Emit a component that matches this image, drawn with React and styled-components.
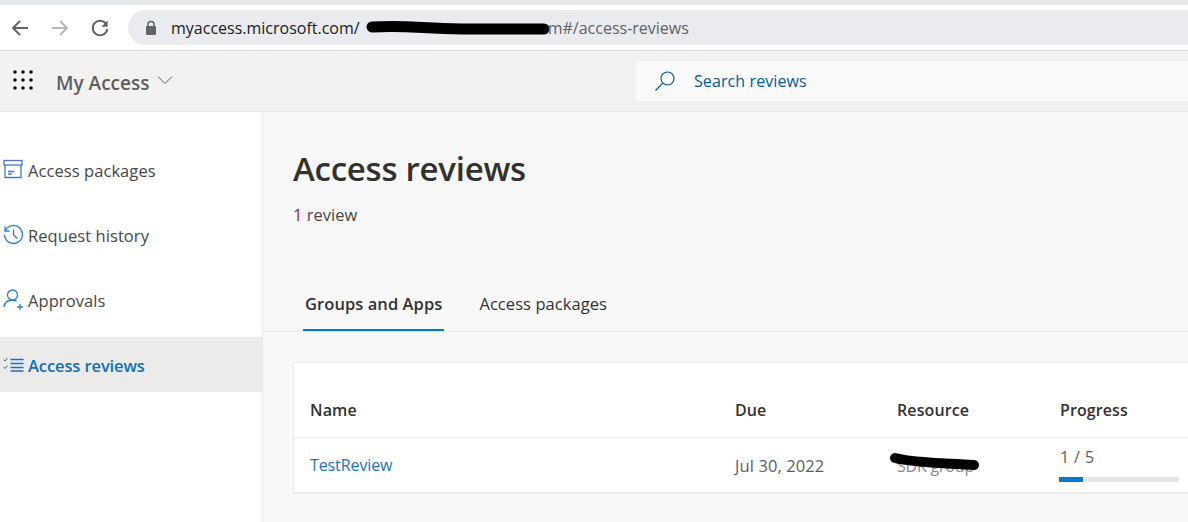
import React from "react";
import styled, { createGlobalStyle } from "styled-components";

const GlobalStyle = createGlobalStyle`
  html, body {
    margin: 0;
    padding: 0;
    height: 100%;
    overflow: hidden;
    background: #f8f8f8;
    font-family: "Open Sans", "Noto Sans", "Liberation Sans", sans-serif;
  }
  * {
    box-sizing: border-box;
  }
`;

const Page = styled.div`
  width: 1188px;
  height: 522px;
  display: flex;
  flex-direction: column;
  overflow: hidden;
`;

const TabStrip = styled.div`
  height: 5px;
  flex: none;
  background: #e6e9ec;
`;

const BrowserBar = styled.div`
  height: 46px;
  flex: none;
  display: flex;
  align-items: flex-start;
  padding: 5px 0 0 10px;
  background: #ffffff;
  border-bottom: 1px solid #dcdcdc;
`;

const NavButton = styled.div`
  width: 40px;
  height: 35px;
  flex: none;
  display: flex;
  align-items: center;
  color: ${(p) => (p.$disabled ? "#b4b6b9" : "#5f6368")};
`;

const AddressPill = styled.div`
  flex: 1;
  height: 35px;
  margin-left: -2px;
  display: flex;
  align-items: center;
  padding-left: 17px;
  background: #e9ebee;
  border-radius: 18px 0 0 18px;
`;

const UrlHost = styled.span`
  margin-left: 14px;
  font-size: 16px;
  color: #202124;
  white-space: nowrap;
`;

const UrlPath = styled.span`
  font-size: 16px;
  color: #5f6368;
  white-space: nowrap;
`;

const UrlScribble = styled.svg`
  width: 190px;
  height: 16px;
  margin: 1px -4px 0 2px;
  flex: none;
`;

const AppHeader = styled.header`
  height: 61px;
  flex: none;
  display: flex;
  align-items: center;
  background: #f3f2f1;
  border-bottom: 1px solid #e6e6e6;
`;

const Waffle = styled.svg`
  width: 20px;
  height: 20px;
  margin: -2px 0 0 13px;
  flex: none;
`;

const AppName = styled.div`
  margin: 4px 0 0 23px;
  font-size: 19px;
  font-weight: 600;
  color: #605e5c;
  white-space: nowrap;
`;

const Caret = styled.svg`
  width: 16px;
  height: 10px;
  margin: -2px 0 0 7px;
  flex: none;
`;

const SearchBox = styled.div`
  width: 552px;
  height: 40px;
  margin-left: auto;
  display: flex;
  align-items: center;
  padding-left: 18px;
  background: #fafafa;
  border-radius: 2px 0 0 2px;
  color: #005a9e;
  font-size: 16px;
  letter-spacing: 0.1px;
`;

const SearchIcon = styled.svg`
  width: 22px;
  height: 22px;
  margin-right: 18px;
  flex: none;
`;

const Body = styled.div`
  flex: 1;
  display: flex;
  min-height: 0;
`;

const Sidebar = styled.nav`
  width: 263px;
  flex: none;
  display: flex;
  flex-direction: column;
  padding-top: 30px;
  background: #ffffff;
  border-right: 1px solid #e8e8e8;
`;

const NavItem = styled.div`
  height: 55px;
  margin-bottom: 10px;
  display: flex;
  align-items: center;
  gap: 4px;
  padding: 2px 0 0 3px;
  font-size: 16.5px;
  white-space: nowrap;
  color: ${(p) => (p.$active ? "#106ebe" : "#484644")};
  font-weight: ${(p) => (p.$active ? 600 : 400)};
  letter-spacing: ${(p) => (p.$active ? "-0.1px" : "0.07px")};
  background: ${(p) => (p.$active ? "#edebe9" : "transparent")};
`;

const NavIcon = styled.svg`
  width: 21px;
  height: 21px;
  margin-top: -2px;
  flex: none;
`;

const Main = styled.main`
  flex: 1;
  min-width: 0;
  display: flex;
  flex-direction: column;
  padding-top: 34px;
`;

const Title = styled.h1`
  margin: 0 0 0 30px;
  font-size: 33px;
  line-height: 46px;
  font-weight: 600;
  letter-spacing: -0.25px;
  color: #323130;
`;

const ReviewCount = styled.div`
  margin: 12px 0 0 30px;
  font-size: 16.5px;
  line-height: 22px;
  color: #484644;
`;

const CountNumber = styled.span`
  color: #a4262c;
`;

const Tabs = styled.div`
  height: 47px;
  margin-top: 59px;
  display: flex;
  gap: 33px;
  padding-left: 40px;
  border-bottom: 1px solid #e8e8e8;
`;

const Tab = styled.div`
  height: 46px;
  padding: 7px 2px 0;
  display: flex;
  align-items: flex-start;
  font-size: 16.5px;
  letter-spacing: 0.07px;
  white-space: nowrap;
  color: #323130;
  font-weight: ${(p) => (p.$active ? 600 : 400)};
  border-bottom: 2px solid ${(p) => (p.$active ? "#0078d4" : "transparent")};
`;

const Card = styled.section`
  margin: 30px 0 0 30px;
  height: 132px;
  display: flex;
  flex-direction: column;
  background: #ffffff;
  border: 1px solid #ececec;
  border-bottom-width: 2px;
  border-right: 0;
`;

const Row = styled.div`
  display: grid;
  grid-template-columns: 425px 162px 163px 1fr;
  padding-left: 16px;
`;

const HeaderRow = styled(Row)`
  height: 75px;
  align-items: end;
  padding-bottom: 15px;
  border-bottom: 1px solid #ececec;
`;

const HeaderCell = styled.div`
  font-size: 16px;
  line-height: 24px;
  font-weight: 600;
  letter-spacing: 0.1px;
  color: #323130;
`;

const DataRow = styled(Row)`
  flex: 1;
  align-items: center;
`;

const NameLink = styled.a`
  font-size: 16px;
  letter-spacing: -0.1px;
  color: #1a74bd;
`;

const DateCell = styled.div`
  font-size: 16.5px;
  letter-spacing: 0.1px;
  color: #605e5c;
`;

const ResourceCell = styled.div`
  position: relative;
  margin-top: 2px;
  font-size: 16px;
  letter-spacing: -0.2px;
  color: #8a8886;
`;

const ResourceScribble = styled.svg`
  position: absolute;
  left: -8px;
  top: -3px;
  width: 92px;
  height: 24px;
`;

const ProgressCell = styled.div`
  align-self: start;
  padding-top: 6px;
`;

const ProgressLabel = styled.div`
  font-size: 16px;
  line-height: 26px;
  letter-spacing: 0.4px;
  color: #605e5c;
`;

const ProgressTrack = styled.div`
  width: 120px;
  height: 5px;
  margin: 7px 0 0 -1px;
  background: #e8e6e4;
`;

const ProgressFill = styled.div`
  height: 100%;
  background: #0078d4;
`;

const NAV_STROKE = "#2b7cd3";

function ArrowIcon({ flip }) {
  return (
    <svg width="20" height="20" viewBox="0 0 20 20" fill="none" stroke="currentColor" strokeWidth="1.9"
      style={flip ? { transform: "scaleX(-1)" } : undefined}>
      <path d="M18 10H3M10 3l-7 7 7 7" />
    </svg>
  );
}

function App() {
  const progress = 1 / 5;

  return (
    <Page>
      <GlobalStyle />
      <TabStrip />
      <BrowserBar>
        <NavButton>
          <ArrowIcon />
        </NavButton>
        <NavButton $disabled>
          <ArrowIcon flip />
        </NavButton>
        <NavButton>
          <svg width="20" height="20" viewBox="0 0 20 20" fill="none">
            <path d="M16.3 6.2A7.3 7.3 0 1 0 17.3 11" stroke="currentColor" strokeWidth="1.9" />
            <path d="M17.6 2.6v6.2h-6.2z" fill="currentColor" />
          </svg>
        </NavButton>
        <AddressPill>
          <svg width="12" height="16" viewBox="0 0 12 16" fill="none">
            <path d="M3 7V4.6a3 3 0 0 1 6 0V7" stroke="#5f6368" strokeWidth="1.5" />
            <rect x="1" y="6" width="10" height="9" rx="1.2" fill="#5f6368" />
          </svg>
          <UrlHost>myaccess.microsoft.com/</UrlHost>
          <UrlScribble viewBox="0 0 190 16">
            <path d="M10 7 C50 5 60 9 100 9 S160 9 182 9" stroke="#000" strokeWidth="11" strokeLinecap="round" fill="none" />
          </UrlScribble>
          <UrlPath>m#/access-reviews</UrlPath>
        </AddressPill>
      </BrowserBar>
      <AppHeader>
        <Waffle viewBox="0 0 20 20" fill="#111">
          {[2, 10, 18].map((y) =>
            [2, 10, 18].map((x) => <circle key={`${x}-${y}`} cx={x} cy={y} r="1.8" />)
          )}
        </Waffle>
        <AppName>My Access</AppName>
        <Caret viewBox="0 0 16 10" fill="none" stroke="#605e5c" strokeWidth="1">
          <path d="M1 1.5l7 7 7-7" />
        </Caret>
        <SearchBox>
          <SearchIcon viewBox="0 0 22 22" fill="none" stroke="#005a9e" strokeWidth="1.2">
            <circle cx="13.5" cy="8.5" r="6.5" />
            <path d="M8.8 13.2L1.5 20.5" />
          </SearchIcon>
          Search reviews
        </SearchBox>
      </AppHeader>
      <Body>
        <Sidebar>
          <NavItem>
            <NavIcon viewBox="0 0 21 21" fill="none" stroke="#4a78c8" strokeWidth="1.3">
              <rect x="1" y="1.5" width="18" height="4.5" />
              <path d="M2 6v12.5h16V6M5 12.5h6M5 15h4" />
            </NavIcon>
            Access packages
          </NavItem>
          <NavItem>
            <NavIcon viewBox="0 0 21 21" fill="none" stroke={NAV_STROKE} strokeWidth="1.3">
              <path d="M2.4 6.5A9 9 0 1 1 1.5 11" />
              <path d="M2 2.5v4.5h4.5M10.5 5.5v5.5l4 3.5" />
            </NavIcon>
            Request history
          </NavItem>
          <NavItem>
            <NavIcon viewBox="0 0 21 21" fill="none" stroke={NAV_STROKE} strokeWidth="1.3">
              <circle cx="9.5" cy="6" r="5" />
              <path d="M1 18c.5-4.5 3.5-7 8.5-7 1.5 0 3 .4 4.2 1.2M14 18h6M17 15v6" />
            </NavIcon>
            Approvals
          </NavItem>
          <NavItem $active>
            <NavIcon viewBox="0 0 21 21" fill="none" stroke="#1f6fbf" strokeWidth="1.3">
              <path d="M7.5 5.5h13M7.5 9.5h13M7.5 13.5h13M7.5 17h13" />
              <path d="M.5 5.5l1.5 1.5 2.5-3M.5 13l1.5 1.5 2.5-3" strokeWidth="1" />
            </NavIcon>
            Access reviews
          </NavItem>
        </Sidebar>
        <Main>
          <Title>Access reviews</Title>
          <ReviewCount>
            <CountNumber>1</CountNumber> review
          </ReviewCount>
          <Tabs>
            <Tab $active>Groups and Apps</Tab>
            <Tab>Access packages</Tab>
          </Tabs>
          <Card>
            <HeaderRow>
              <HeaderCell>Name</HeaderCell>
              <HeaderCell>Due</HeaderCell>
              <HeaderCell>Resource</HeaderCell>
              <HeaderCell>Progress</HeaderCell>
            </HeaderRow>
            <DataRow>
              <NameLink>TestReview</NameLink>
              <DateCell>Jul 30, 2022</DateCell>
              <ResourceCell>
                SDK group
                <ResourceScribble viewBox="0 0 92 24">
                  <path d="M6 6 C25 11 55 11 85 13" stroke="#000" strokeWidth="10" strokeLinecap="round" fill="none" />
                </ResourceScribble>
              </ResourceCell>
              <ProgressCell>
                <ProgressLabel>1 / 5</ProgressLabel>
                <ProgressTrack>
                  <ProgressFill style={{ width: `${progress * 100}%` }} />
                </ProgressTrack>
              </ProgressCell>
            </DataRow>
          </Card>
        </Main>
      </Body>
    </Page>
  );
}

export default App;
